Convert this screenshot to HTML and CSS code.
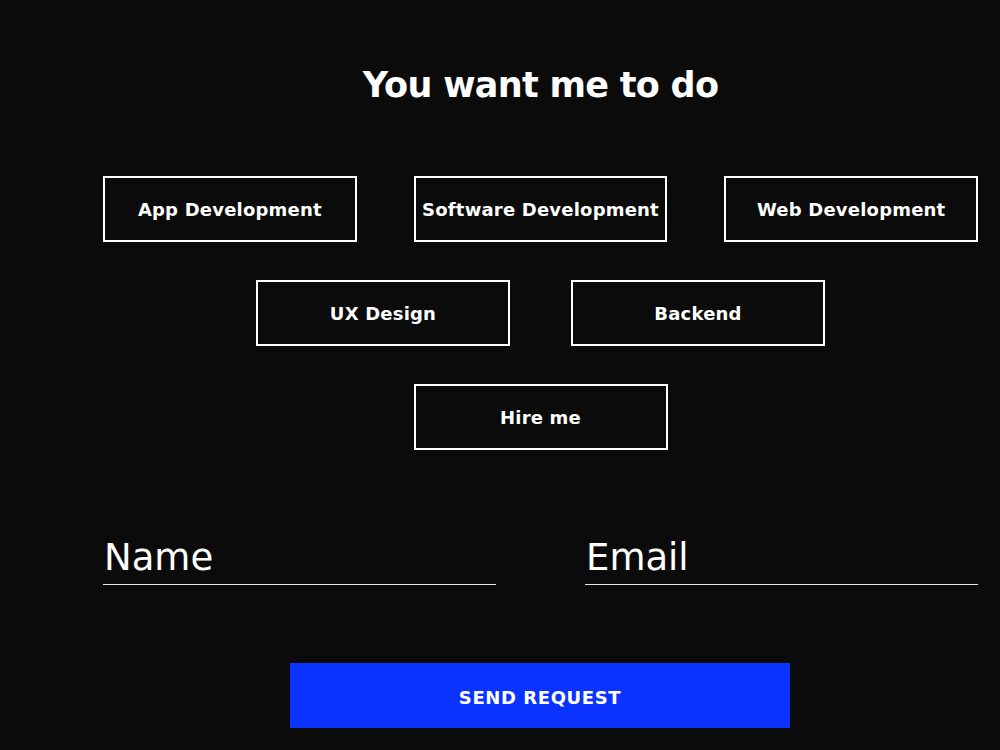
FILE: index.html
```html
<!DOCTYPE html>
<html>
<head>
<meta charset="utf-8">
<link rel="stylesheet" href="styles.css">
</head>
<body>
<main class="page">
  <h1 class="title">You want me to do</h1>
  <div class="options">
    <div class="row row-3">
      <button class="opt">App Development</button>
      <button class="opt">Software Development</button>
      <button class="opt">Web Development</button>
    </div>
    <div class="row row-2">
      <button class="opt">UX Design</button>
      <button class="opt">Backend</button>
    </div>
    <div class="row">
      <button class="opt">Hire me</button>
    </div>
  </div>
  <form class="form">
    <div class="fields">
      <input class="field" type="text" placeholder="Name">
      <input class="field" type="email" placeholder="Email">
    </div>
    <button class="send" type="button">SEND REQUEST</button>
  </form>
</main>
</body>
</html>
```
FILE: styles.css
```css
html, body {
  margin: 0;
  background: #0b0b0b;
}
body {
  font-family: "DejaVu Sans", "Liberation Sans", sans-serif;
  color: #fff;
}
.page {
  padding: 62px 22px 0 103px;
  width: 875px;
}
.title {
  margin: 0;
  text-align: center;
  font-size: 35px;
  font-weight: 700;
  line-height: 46px;
  letter-spacing: -0.7px;
}
.options {
  margin-top: 68px;
  display: flex;
  flex-direction: column;
  row-gap: 38px;
}
.row {
  display: flex;
  justify-content: center;
}
.row-3 {
  column-gap: 57px;
}
.row-2 {
  column-gap: 61px;
}
.opt {
  width: 254px;
  height: 66px;
  box-sizing: border-box;
  border: 2px solid #fff;
  background: #0b0b0b;
  color: #fff;
  font-family: "DejaVu Sans", sans-serif;
  font-weight: 700;
  font-size: 18px;
  letter-spacing: 0.2px;
  padding: 0;
}
.form {
  margin-top: 84px;
}
.fields {
  display: flex;
  justify-content: space-between;
}
.field {
  width: 393px;
  box-sizing: border-box;
  background: transparent;
  border: 0;
  border-bottom: 1px solid #e6e6e6;
  color: #fff;
  font-family: "DejaVu Sans", sans-serif;
  font-size: 37px;
  padding: 0 0 3px 1px;
  height: 51px;
  outline: none;
}
.field::placeholder {
  color: #fff;
  opacity: 1;
}
.send {
  display: block;
  margin: 78px 0 0 187px;
  width: 500px;
  height: 65px;
  border: 0;
  padding: 4px 0 0;
  background: #0a33ff;
  color: #fff;
  font-family: "DejaVu Sans", sans-serif;
  font-weight: 700;
  font-size: 18px;
  letter-spacing: 0.6px;
}
```
